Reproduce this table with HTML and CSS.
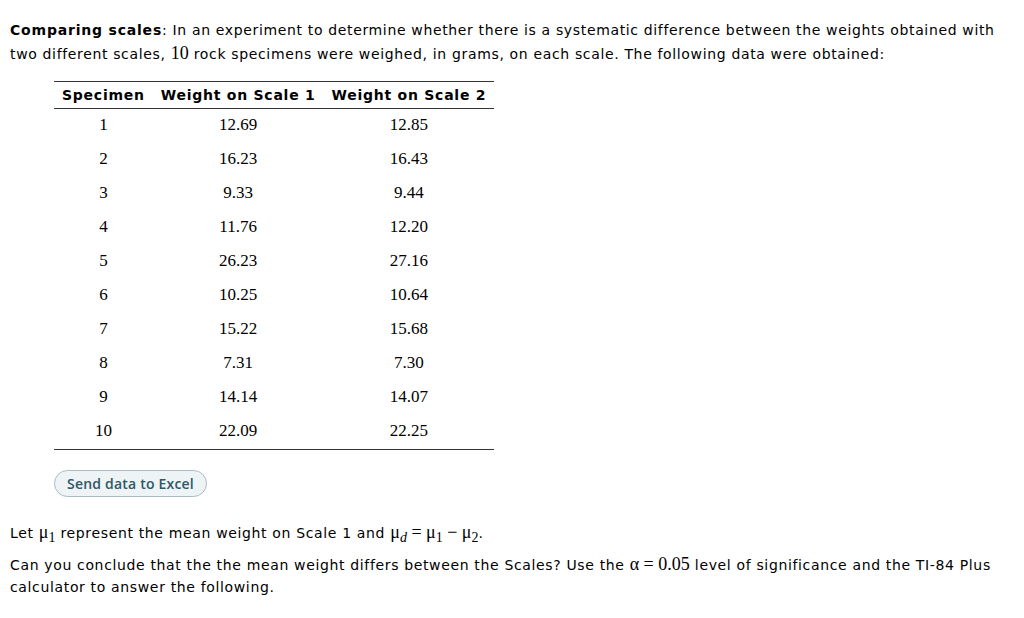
FILE: index.html
```html
<!DOCTYPE html>
<html>
<head>
<meta charset="utf-8">
<link rel="stylesheet" href="styles.css">
</head>
<body>
<div class="page">
  <p class="intro"><b>Comparing scales</b>: In an experiment to determine whether there is a systematic difference between the weights obtained with two different scales, <span class="m">10</span> rock specimens were weighed, in grams, on each scale. The following data were obtained:</p>
  <table class="data">
    <thead>
      <tr><th>Specimen</th><th>Weight on Scale 1</th><th>Weight on Scale 2</th></tr>
    </thead>
    <tbody>
      <tr><td>1</td><td>12.69</td><td>12.85</td></tr>
      <tr><td>2</td><td>16.23</td><td>16.43</td></tr>
      <tr><td>3</td><td>9.33</td><td>9.44</td></tr>
      <tr><td>4</td><td>11.76</td><td>12.20</td></tr>
      <tr><td>5</td><td>26.23</td><td>27.16</td></tr>
      <tr><td>6</td><td>10.25</td><td>10.64</td></tr>
      <tr><td>7</td><td>15.22</td><td>15.68</td></tr>
      <tr><td>8</td><td>7.31</td><td>7.30</td></tr>
      <tr><td>9</td><td>14.14</td><td>14.07</td></tr>
      <tr><td>10</td><td>22.09</td><td>22.25</td></tr>
    </tbody>
  </table>
  <div class="btnrow"><button class="excel">Send data to Excel</button></div>
  <p class="q1">Let <span class="m">μ<sub>1</sub></span> represent the mean weight on Scale 1 and <span class="m">μ<sub><i>d</i></sub> = μ<sub>1</sub> − μ<sub>2</sub></span>.</p>
  <p class="q2">Can you conclude that the the mean weight differs between the Scales? Use the <span class="m">α = 0.05</span> level of significance and the TI-84 Plus calculator to answer the following.</p>
</div>
</body>
</html>
```

FILE: styles.css
```css
html, body {
  margin: 0;
  padding: 0;
  background: #fff;
}
.page {
  padding: 19px 10px 0 10px;
  font-family: "DejaVu Sans", Verdana, sans-serif;
  font-size: 14px;
  letter-spacing: 0.65px;
  color: #000;
  line-height: 23px;
}
.intro {
  margin: 0;
}
.intro b {
  letter-spacing: 0.8px;
}
.m {
  font-family: "Liberation Serif", "Times New Roman", serif;
  font-size: 18px;
  letter-spacing: 0;
}
.m sub {
  font-size: 14px;
  vertical-align: -4px;
  line-height: 0;
}
.data {
  margin: 15px 0 0 44px;
  border-collapse: collapse;
  border-top: 1px solid #333;
  border-bottom: 1px solid #333;
}
.data th {
  font-weight: bold;
  font-size: 14px;
  letter-spacing: 0.75px;
  height: 26px;
  padding: 0 8px;
  border-bottom: 1px solid #333;
  text-align: center;
  white-space: nowrap;
}
.data td {
  font-family: "Liberation Serif", "Times New Roman", serif;
  font-size: 17px;
  letter-spacing: 0;
  height: 31px;
  padding: 0 8px 3px 8px;
  text-align: center;
}
.btnrow {
  display: flex;
  margin: 20px 0 0 44px;
}
.excel {
  font-family: "Open Sans", Lato, sans-serif;
  font-weight: 600;
  font-size: 14px;
  letter-spacing: 0.2px;
  color: #2d5866;
  background: #eef3f5;
  border: 1px solid #a9bcc4;
  border-radius: 14px;
  height: 27px;
  padding: 0 12px;
}
.q1 {
  margin: 24px 0 0 0;
}
.q2 {
  margin: 8px 0 0 0;
  line-height: 22px;
}
```
